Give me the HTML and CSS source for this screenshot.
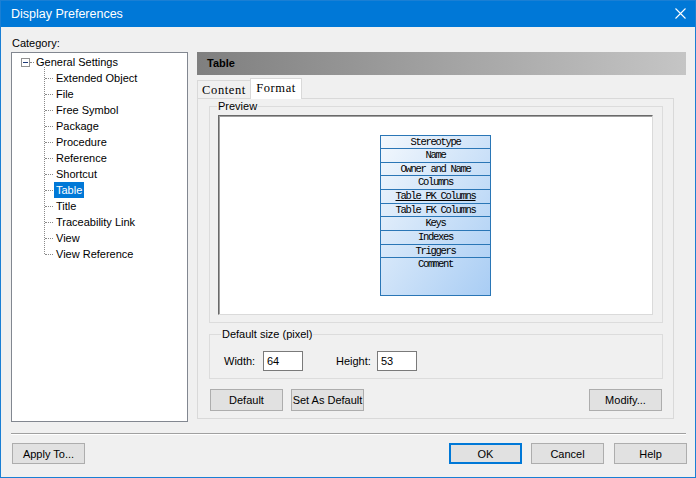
FILE: index.html
```html
<!DOCTYPE html>
<html lang="en">
<head>
    <meta charset="UTF-8">
    <meta name="viewport" content="width=device-width, initial-scale=1.0">
    <title>Display Preferences</title>
    <link rel="stylesheet" href="styles.css">
</head>
<body>
    <div class="window">
        <div class="titlebar">
            <span class="title">Display Preferences</span>
            <svg class="close" width="11" height="11" viewBox="0 0 11 11">
                <path d="M0.5 0.5L10.5 10.5M10.5 0.5L0.5 10.5" stroke="#fff" stroke-width="1.1" fill="none"/>
            </svg>
        </div>

        <div class="content">
            <div class="main">
                <div class="category">
                    <div class="label">Category:</div>
                    <div class="tree">
                        <div class="node root"><span class="toggle"></span><span class="text">General Settings</span></div>
                        <ul class="children">
                            <li><span class="text">Extended Object</span></li>
                            <li><span class="text">File</span></li>
                            <li><span class="text">Free Symbol</span></li>
                            <li><span class="text">Package</span></li>
                            <li><span class="text">Procedure</span></li>
                            <li><span class="text">Reference</span></li>
                            <li><span class="text">Shortcut</span></li>
                            <li class="selected"><span class="text">Table</span></li>
                            <li><span class="text">Title</span></li>
                            <li><span class="text">Traceability Link</span></li>
                            <li><span class="text">View</span></li>
                            <li><span class="text">View Reference</span></li>
                        </ul>
                    </div>
                </div>

                <div class="settings">
                    <div class="header">Table</div>
                    <div class="tabs">
                        <div class="tab">Content</div>
                        <div class="tab active">Format</div>
                    </div>
                    <div class="panel">
                        <fieldset class="group preview-group">
                            <legend>Preview</legend>
                            <div class="preview">
                                <div class="symbol">
                                    <div class="row">Stereotype</div>
                                    <div class="row">Name</div>
                                    <div class="row">Owner and Name</div>
                                    <div class="row">Columns</div>
                                    <div class="row"><u>Table PK Columns</u></div>
                                    <div class="row">Table FK Columns</div>
                                    <div class="row">Keys</div>
                                    <div class="row">Indexes</div>
                                    <div class="row">Triggers</div>
                                    <div class="comment">Comment</div>
                                </div>
                            </div>
                        </fieldset>

                        <fieldset class="group size-group">
                            <legend>Default size (pixel)</legend>
                            <div class="size-row">
                                <label class="size-label">Width:</label>
                                <input class="size-input" type="text" value="64">
                                <label class="size-label height-label">Height:</label>
                                <input class="size-input" type="text" value="53">
                            </div>
                        </fieldset>

                        <div class="panel-buttons">
                            <button class="btn">Default</button>
                            <button class="btn">Set As Default</button>
                            <button class="btn modify">Modify...</button>
                        </div>
                    </div>
                </div>
            </div>

            <div class="separator"></div>

            <div class="dialog-buttons">
                <button class="btn small">Apply To...</button>
                <button class="btn small ok">OK</button>
                <button class="btn small cancel">Cancel</button>
                <button class="btn small help">Help</button>
            </div>
        </div>
    </div>
</body>
</html>
```

FILE: styles.css
```css
body {
    margin: 0;
    font-family: "Liberation Sans", Arial, sans-serif;
    font-size: 11px;
    color: #000;
}

.window {
    width: 696px;
    height: 478px;
    box-sizing: border-box;
    border: 1px solid #1a7fd4;
    background-color: #f0f0f0;
}

.titlebar {
    height: 26px;
    background-color: #0078d7;
    display: flex;
    align-items: center;
    justify-content: space-between;
    padding: 0 9px 0 10px;
}

.title {
    color: #fff;
    font-size: 12.5px;
}

.close {
    display: block;
    margin-top: -1px;
}

.content {
    padding: 8px 9px 0 10px;
}

.main {
    display: flex;
    gap: 9px;
}

/* category tree */
.label {
    line-height: 16px;
    height: 17px;
    padding-left: 1px;
}

.tree {
    width: 177px;
    height: 370px;
    box-sizing: border-box;
    border: 1px solid #828790;
    background-color: #fff;
    padding-top: 1px;
}

.node,
.children li {
    height: 16px;
    display: flex;
    align-items: flex-start;
    position: relative;
}

.root {
    padding-left: 9px;
}

.toggle {
    width: 9px;
    height: 9px;
    box-sizing: border-box;
    border: 1px solid #919191;
    margin-top: 4px;
    margin-right: 4px;
    position: relative;
}

.toggle::before {
    content: "";
    position: absolute;
    left: 1px;
    top: 3px;
    width: 5px;
    height: 1px;
    background-color: #1e3a78;
}

.toggle::after {
    content: "";
    position: absolute;
    left: 8px;
    top: 3px;
    width: 4px;
    border-top: 1px dotted #8a8a8a;
}

.text {
    padding: 0 2px;
    line-height: 16px;
    white-space: nowrap;
}

.children {
    margin: 0;
    padding: 0;
    list-style: none;
    position: relative;
}

.children::before {
    content: "";
    position: absolute;
    left: 32px;
    top: -3px;
    height: calc(100% - 5px);
    border-left: 1px dotted #8a8a8a;
}

.children li {
    padding-left: 42px;
}

.children li::before {
    content: "";
    position: absolute;
    left: 33px;
    top: 8px;
    width: 8px;
    border-top: 1px dotted #8a8a8a;
}

.children li.selected .text {
    background-color: #0078d7;
    color: #fff;
}

/* right side */
.settings {
    width: 489px;
    padding-top: 17px;
}

.header {
    height: 23px;
    line-height: 23px;
    padding-left: 10px;
    font-weight: bold;
    background: linear-gradient(to right, #7f7f7f, #c5c5c5);
}

.tabs {
    display: flex;
    align-items: flex-end;
    height: 20px;
    margin-top: 3px;
}

.tab {
    box-sizing: border-box;
    border: 1px solid #d9d9d9;
    border-bottom: none;
    text-align: center;
    font-family: "Liberation Serif", "Times New Roman", serif;
    font-size: 12.5px;
    letter-spacing: 0.6px;
    background-color: #f0f0f0;
}

.tab:first-child {
    width: 53px;
    height: 18px;
    line-height: 18px;
    border-right: none;
}

.tab.active {
    width: 52px;
    height: 21px;
    line-height: 19px;
    margin-bottom: -1px;
    background-color: #fff;
    position: relative;
    z-index: 1;
}

.panel {
    width: 477px;
    height: 321px;
    box-sizing: border-box;
    border: 1px solid #d9d9d9;
    padding: 1px 10px 0 11px;
}

.group {
    margin: 0;
    min-width: 0;
    border: 1px solid #dcdcdc;
}

.group legend {
    padding: 0 1px;
    line-height: 13px;
    font-size: 11px;
}

.preview-group {
    padding: 2px 9px 7px 8px;
}

.preview-group legend {
    margin-left: -1px;
}

.preview {
    height: 200px;
    box-sizing: border-box;
    border-top: 1px solid #696969;
    border-left: 1px solid #696969;
    border-right: 1px solid #dadada;
    border-bottom: 1px solid #dadada;
    box-shadow: inset 1px 1px 0 #a0a0a0;
    background-color: #fff;
    display: flex;
    justify-content: center;
    align-items: center;
}

.symbol {
    width: 111px;
    height: 161px;
    box-sizing: border-box;
    border: 1px solid #2a76b6;
    background: linear-gradient(to bottom right, #f3f8fd, #a9cdf4);
    display: flex;
    flex-direction: column;
    font-family: "Liberation Mono", "Courier New", monospace;
    font-size: 10.5px;
    letter-spacing: -1.3px;
    color: #000;
    text-align: center;
}

.row {
    height: 13.67px;
    line-height: 13px;
    box-sizing: border-box;
    border-bottom: 1px solid #2a76b6;
}

.comment {
    flex: 1;
    line-height: 12px;
}

.size-group {
    margin-top: 5px;
    padding: 10px 0 7px 14px;
}

.size-group legend {
    margin-left: -3px;
}

.size-row {
    display: flex;
    align-items: center;
    height: 20px;
}

.size-label {
    width: 39px;
}

.height-label {
    width: 41px;
    margin-left: 33px;
}

.size-input {
    width: 40px;
    height: 20px;
    box-sizing: border-box;
    border: 1px solid #7a7a7a;
    padding: 0 3px;
    margin: 0;
    font-family: "Liberation Sans", Arial, sans-serif;
    font-size: 11px;
    color: #000;
    background-color: #fff;
}

.btn {
    width: 73px;
    height: 22px;
    box-sizing: border-box;
    border: 1px solid #adadad;
    background-color: #e1e1e1;
    padding: 0;
    margin: 0;
    font-family: "Liberation Sans", Arial, sans-serif;
    font-size: 11px;
    color: #000;
    white-space: nowrap;
}

.panel-buttons {
    display: flex;
    gap: 8px;
    margin: 10px 1px 0 1px;
}

.modify {
    margin-left: auto;
}

/* bottom bar */
.separator {
    margin-top: 11px;
    border-top: 1px solid #a0a0a0;
    border-bottom: 1px solid #fff;
}

.dialog-buttons {
    display: flex;
    margin: 8px -1px 0 1px;
}

.btn.small {
    height: 21px;
}

.ok {
    margin-left: auto;
    border: 2px solid #0078d7;
}

.cancel {
    margin-left: 9px;
}

.help {
    margin-left: 10px;
}
```
